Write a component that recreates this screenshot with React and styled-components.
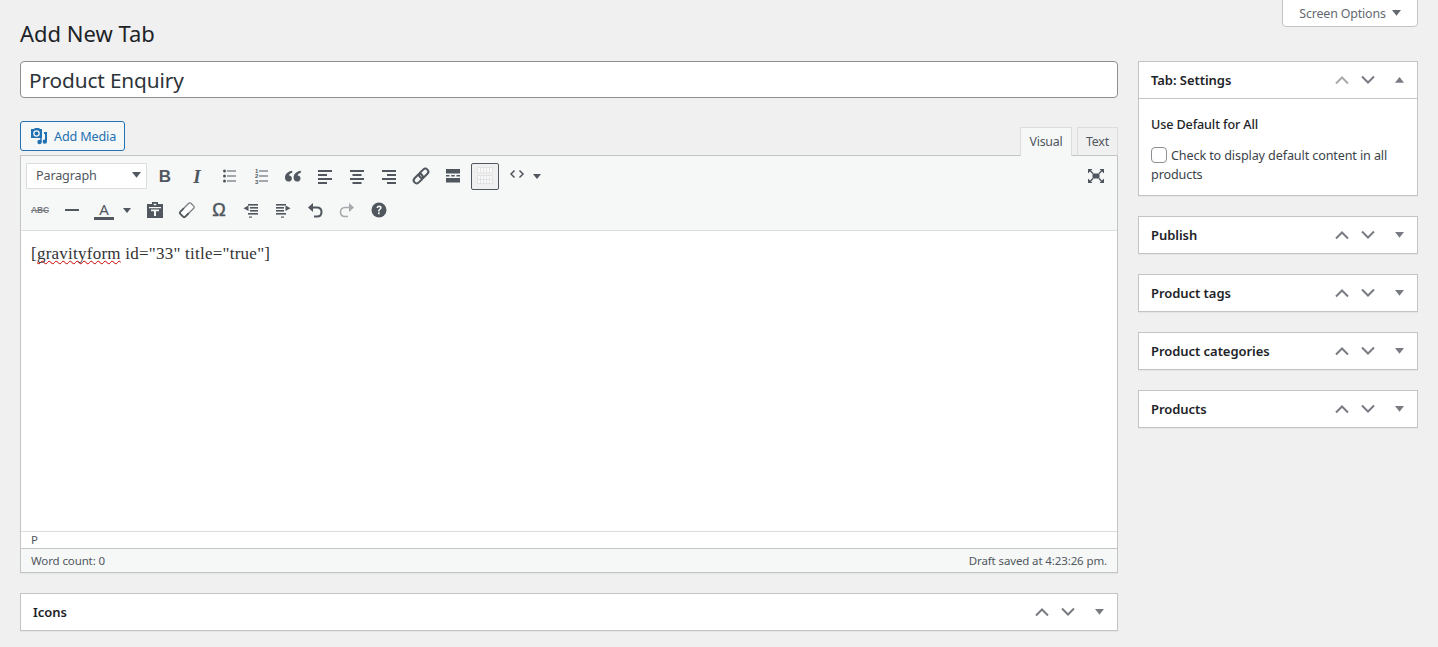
import React from "react";
import styled, { createGlobalStyle } from "styled-components";

const GlobalStyle = createGlobalStyle`
  html, body {
    margin: 0;
    padding: 0;
    background: #f0f0f1;
    color: #3c434a;
    font-family: "Noto Sans", "Open Sans", sans-serif;
    font-size: 13px;
    overflow: hidden;
  }
  * {
    box-sizing: border-box;
  }
`;

const Page = styled.div`
  width: 1438px;
  height: 647px;
  padding: 0 20px;
  overflow: hidden;
`;

const ScreenMeta = styled.div`
  display: flex;
  justify-content: flex-end;
  height: 18px;
`;

const ScreenButton = styled.div`
  width: 136px;
  height: 28px;
  flex: none;
  margin-top: -1px;
  display: flex;
  align-items: center;
  justify-content: center;
  gap: 6px;
  background: #fff;
  border: 1px solid #c3c4c7;
  border-radius: 0 0 4px 4px;
  color: #646970;
  font-size: 12.4px;
  letter-spacing: -0.15px;
`;

const Heading = styled.h1`
  margin: 0 0 13px;
  height: 30px;
  line-height: 30px;
  font-size: 22px;
  font-weight: 400;
  color: #1d2327;
  letter-spacing: 0;
`;

const Columns = styled.div`
  display: grid;
  grid-template-columns: 1098px 280px;
  column-gap: 20px;
`;

const Main = styled.div`
  display: flex;
  flex-direction: column;
`;

const TitleInput = styled.div`
  height: 37px;
  display: flex;
  align-items: center;
  padding-left: 8px;
  background: #fff;
  border: 1px solid #8c8f94;
  border-radius: 4px;
  font-size: 20.8px;
  color: #2c3338;
  letter-spacing: -0.12px;
`;

const EditorTop = styled.div`
  display: flex;
  justify-content: space-between;
  align-items: flex-end;
  height: 57px;
`;

const MediaButton = styled.div`
  width: 105px;
  height: 30px;
  margin-bottom: 4px;
  display: flex;
  align-items: center;
  gap: 5px;
  padding-left: 8px;
  background: #f6f7f7;
  border: 1px solid #2271b1;
  border-radius: 3px;
  color: #2271b1;
  font-size: 12.6px;
  letter-spacing: -0.15px;
`;

const Tabs = styled.div`
  display: flex;
  gap: 5px;
  align-items: flex-end;
  position: relative;
  z-index: 1;
  margin-bottom: -1px;
`;

const Tab = styled.div`
  width: ${(p) => p.$width}px;
  height: 29px;
  display: flex;
  align-items: center;
  justify-content: center;
  padding-bottom: 1px;
  background: ${(p) => (p.$active ? "#f6f7f7" : "#f0f0f1")};
  border: 1px solid #dcdcde;
  border-bottom: ${(p) => (p.$active ? "none" : "1px solid #c3c4c7")};
  color: #50575e;
  font-size: 12.4px;
  letter-spacing: -0.2px;
`;

const Editor = styled.div`
  height: 418px;
  display: flex;
  flex-direction: column;
  border: 1px solid #c3c4c7;
  background: #fff;
  box-shadow: 0 1px 1px rgba(0, 0, 0, 0.04);
`;

const Toolbar = styled.div`
  height: 75px;
  flex: none;
  display: flex;
  flex-direction: column;
  gap: 6px;
  padding: 6px 5px 0;
  background: #f6f7f7;
  border-bottom: 1px solid #dcdcde;
`;

const ToolRow = styled.div`
  display: flex;
  align-items: center;
  gap: 4px;
  height: 28px;
`;

const ParagraphSelect = styled.div`
  width: 121px;
  height: 26px;
  display: flex;
  align-items: center;
  justify-content: space-between;
  padding: 0 5px 2px 9px;
  background: #fff;
  border: 1px solid #dcdcde;
  font-size: 12.6px;
  color: #50575e;
  letter-spacing: -0.15px;
`;

const ToolButton = styled.div`
  width: ${(p) => p.$width || 28}px;
  height: ${(p) => (p.$boxed ? 27 : 28)}px;
  flex: none;
  display: flex;
  align-items: center;
  justify-content: ${(p) => (p.$width ? "flex-start" : "center")};
  gap: ${(p) => p.$gap || 0}px;
  padding-left: ${(p) => (p.$width ? 4 : 0)}px;
  color: #50575e;
  border: ${(p) => (p.$boxed ? "1px solid #50575e" : "none")};
  border-radius: ${(p) => (p.$boxed ? "2px" : "0")};
  background: ${(p) => (p.$boxed ? "#f0f0f1" : "transparent")};
  margin-left: ${(p) => (p.$push ? "auto" : "0")};
  margin-right: ${(p) => (p.$push ? "2px" : "0")};
`;

const BoldGlyph = styled.span`
  font-family: "Liberation Sans", sans-serif;
  font-weight: 700;
  font-size: 17px;
  line-height: 1;
`;

const ItalicGlyph = styled(BoldGlyph)`
  font-family: "Liberation Serif", serif;
  font-style: italic;
  font-size: 19px;
`;

const OmegaGlyph = styled(BoldGlyph)`
  font-size: 18px;
  font-weight: 400;
  -webkit-text-stroke: 0.5px #50575e;
`;

const StrikeGlyph = styled.span`
  font-family: "Liberation Sans", sans-serif;
  font-size: 8.5px;
  font-weight: 700;
  letter-spacing: -0.2px;
  line-height: 1;
  color: #787c82;
  text-decoration: line-through;
`;

const ColorGlyph = styled.span`
  width: 20px;
  height: 20px;
  display: flex;
  justify-content: center;
  font-family: "Noto Sans", sans-serif;
  font-size: 15px;
  line-height: 18px;
  border-bottom: 3px solid #50575e;
`;

const Content = styled.div`
  flex: 1;
  padding: 10px 10px;
  font-family: "Liberation Serif", serif;
  font-size: 17px;
  line-height: 26px;
  color: #333;
  letter-spacing: 0.24px;
`;

const Misspelled = styled.span`
  text-decoration: underline wavy #c00;
  text-decoration-thickness: 1px;
  text-decoration-skip-ink: none;
  text-underline-offset: 1px;
`;

const PathBar = styled.div`
  height: 17px;
  flex: none;
  padding-left: 10px;
  font-size: 11.5px;
  line-height: 16px;
  color: #50575e;
  border-top: 1px solid #dcdcde;
`;

const StatusBar = styled.div`
  height: 24px;
  flex: none;
  display: flex;
  align-items: center;
  justify-content: space-between;
  padding: 0 10px;
  background: #f6f7f7;
  border-top: 1px solid #c3c4c7;
  font-size: 11.5px;
  letter-spacing: -0.12px;
  color: #50575e;
`;

const Side = styled.div`
  display: flex;
  flex-direction: column;
  gap: 20px;
`;

const Postbox = styled.section`
  background: #fff;
  border: 1px solid #c3c4c7;
  box-shadow: 0 1px 1px rgba(0, 0, 0, 0.04);
  margin-top: ${(p) => p.$top || 0}px;
`;

const BoxHeader = styled.div`
  height: 36px;
  display: flex;
  align-items: center;
  padding-left: 12px;
  border-bottom: ${(p) => (p.$open ? "1px solid #c3c4c7" : "none")};
  box-sizing: content-box;
`;

const BoxTitle = styled.h2`
  flex: 1;
  margin: 0;
  font-size: 13px;
  font-weight: 600;
  color: #1d2327;
  letter-spacing: -0.05px;
`;

const HandleButton = styled.div`
  width: ${(p) => p.$width || 26}px;
  height: 36px;
  display: flex;
  align-items: center;
  justify-content: center;
`;

const BoxBody = styled.div`
  padding: 16px 12px 11px;
  font-size: 12.6px;
  line-height: 19px;
  letter-spacing: -0.12px;
`;

const FieldLabel = styled.div`
  font-weight: 500;
  color: #1d2327;
  margin-bottom: 12px;
`;

const Checkbox = styled.span`
  display: inline-block;
  width: 16px;
  height: 16px;
  margin-right: 4px;
  vertical-align: -3px;
  background: #fff;
  border: 1px solid #8c8f94;
  border-radius: 4px;
`;

const ListDigit = styled.text`
  font-family: "Liberation Sans", sans-serif;
  font-size: 6px;
  font-weight: 700;
`;

const Caret = ({ up, color = "#50575e", w = 8 }) => (
  <svg width={w} height={w * 0.625} viewBox="0 0 8 5">
    <path d={up ? "M0 5 L4 0 L8 5 Z" : "M0 0 L8 0 L4 5 Z"} fill={color} />
  </svg>
);

const Chevron = ({ up, color = "#787c82" }) => (
  <svg width="16" height="10" viewBox="0 0 16 10">
    <path
      d={up ? "M2 8.5 L8 2.5 L14 8.5" : "M2 1.5 L8 7.5 L14 1.5"}
      fill="none"
      stroke={color}
      strokeWidth="2"
    />
  </svg>
);

const Icon = ({ children, color = "#50575e" }) => (
  <svg width="20" height="20" viewBox="0 0 20 20" fill={color}>
    {children}
  </svg>
);

const lines = (rows) =>
  rows.map(([x, y, w, h = 2], i) => <rect key={i} x={x} y={y} width={w} height={h} />);

const icons = {
  ul: (
    <Icon>
      <circle cx="5.5" cy="5" r="1.5" />
      <circle cx="5.5" cy="10" r="1.5" />
      <circle cx="5.5" cy="15" r="1.5" />
      {lines([[8, 4.5, 9, 1], [8, 9.5, 9, 1], [8, 14.5, 9, 1]])}
    </Icon>
  ),
  ol: (
    <Icon>
      <ListDigit x="4" y="6.5">1</ListDigit>
      <ListDigit x="4" y="12">2</ListDigit>
      <ListDigit x="4" y="17.5">3</ListDigit>
      {lines([[8, 4.5, 9, 1], [8, 9.5, 9, 1], [8, 14.5, 9, 1]])}
    </Icon>
  ),
  quote: (
    <Icon>
      <path d="M9.2 4.8 C5 5.3 2 8 2 11.6 C2 14 3.4 15.6 5.5 15.6 C7.4 15.6 8.9 14.3 8.9 12.4 C8.9 10.6 7.6 9.5 6 9.5 C6.2 8.3 7.4 7.2 9.2 6.8 Z" />
      <path d="M17.8 4.8 C13.6 5.3 10.6 8 10.6 11.6 C10.6 14 12 15.6 14.1 15.6 C16 15.6 17.5 14.3 17.5 12.4 C17.5 10.6 16.2 9.5 14.6 9.5 C14.8 8.3 16 7.2 17.8 6.8 Z" />
    </Icon>
  ),
  alignLeft: <Icon>{lines([[3, 4, 14], [3, 8, 9], [3, 12, 14], [3, 16, 9]])}</Icon>,
  alignCenter: <Icon>{lines([[3, 4, 14], [5.5, 8, 9], [3, 12, 14], [5.5, 16, 9]])}</Icon>,
  alignRight: <Icon>{lines([[3, 4, 14], [8, 8, 9], [3, 12, 14], [8, 16, 9]])}</Icon>,
  link: (
    <Icon>
      <g fill="none" stroke="#50575e" strokeWidth="2">
        <rect x="7.45" y="4.3" width="10.5" height="6" rx="3" transform="rotate(-45 12.7 7.3)" />
        <rect x="2.05" y="9.7" width="10.5" height="6" rx="3" transform="rotate(-45 7.3 12.7)" />
      </g>
    </Icon>
  ),
  more: <Icon>{lines([[3, 3, 14, 4.5], [3, 9, 3.5, 1.5], [8.2, 9, 3.5, 1.5], [13.5, 9, 3.5, 1.5], [3, 12, 14, 4.5]])}</Icon>,
  kitchen: (
    <Icon color="#fafafa">
      <rect x="2.5" y="1.5" width="15" height="5.5" />
      <rect x="2.5" y="9.5" width="15" height="8" />
      <g fill="none" stroke="#e2e3e4" strokeWidth="1">
        <rect x="2.5" y="1.5" width="15" height="5.5" />
        <rect x="2.5" y="9.5" width="15" height="8" />
        <path d="M5.5 1.5V7M8.5 1.5V7M11.5 1.5V7M14.5 1.5V7M5.5 9.5V17.5M8.5 9.5V17.5M11.5 9.5V17.5M14.5 9.5V17.5M2.5 13.5H17.5" />
      </g>
    </Icon>
  ),
  code: (
    <Icon>
      <path d="M7.5 6 L4 9.5 L7.5 13 M12.5 6 L16 9.5 L12.5 13" fill="none" stroke="#50575e" strokeWidth="1.5" transform="translate(0 -1.5)" />
    </Icon>
  ),
  fullscreen: (
    <Icon>
      <rect x="6.5" y="7.5" width="7" height="5" />
      <path d="M2 3 H6.5 L5 4.5 L7.5 7 L6.5 8 L4 5.5 L2 7.5 Z M18 3 H13.5 L15 4.5 L12.5 7 L13.5 8 L16 5.5 L18 7.5 Z M2 17 H6.5 L5 15.5 L7.5 13 L6.5 12 L4 14.5 L2 12.5 Z M18 17 H13.5 L15 15.5 L12.5 13 L13.5 12 L16 14.5 L18 12.5 Z" />
    </Icon>
  ),
  hr: <Icon>{lines([[3, 9, 14]])}</Icon>,
  paste: (
    <Icon>
      <path fillRule="evenodd" d="M7 2 H13 V4 H18 V18 H2 V4 H7 Z M8.7 3.7 V5.3 H11.3 V3.7 Z M4 7 V8.3 H16 V7 Z M6 9.5 V11.3 H9 V16 H11 V11.3 H14 V9.5 Z" />
    </Icon>
  ),
  eraser: (
    <Icon>
      <g transform="rotate(45 10 10)">
        <rect x="6.5" y="2.5" width="7" height="15" rx="1.5" fill="#fff" stroke="#787c82" strokeWidth="1.3" />
        <path d="M6.5 11 V16 A1.5 1.5 0 0 0 8 17.5 H12 A1.5 1.5 0 0 0 13.5 16 V11" fill="none" stroke="#50575e" strokeWidth="1.7" />
      </g>
    </Icon>
  ),
  outdent: (
    <Icon>
      {lines([[7, 4, 10, 1.6], [9, 7, 8, 1.6], [9, 10, 8, 1.6], [7, 13, 10, 1.6], [8, 16.5, 3, 1.2]])}
      <path d="M2.5 8.3 L7.5 5.5 V11 Z" />
    </Icon>
  ),
  indent: (
    <Icon>
      {lines([[3, 4, 10, 1.6], [3, 7, 8, 1.6], [3, 10, 8, 1.6], [3, 13, 10, 1.6], [8, 16.5, 3, 1.2]])}
      <path d="M17.5 8.3 L12.5 5.5 V11 Z" />
    </Icon>
  ),
  undo: (
    <Icon>
      <path d="M4.5 7.5 H12 C15 7.5 16.5 9.5 16.5 12 C16.5 14.5 15 16.5 12 16.5 H9" fill="none" stroke="#50575e" strokeWidth="2" />
      <path d="M3 7.5 L8 3 V12 Z" />
    </Icon>
  ),
  redo: (
    <Icon color="#a7aaad">
      <path d="M15.5 7.5 H8 C5 7.5 3.5 9.5 3.5 12 C3.5 14.5 5 16.5 8 16.5 H11" fill="none" stroke="#a7aaad" strokeWidth="1.6" />
      <path d="M17 7.5 L12 3 V12 Z" />
    </Icon>
  ),
  help: (
    <Icon>
      <circle cx="10" cy="10" r="7.5" />
      <path d="M7.5 8 C7.5 6.5 8.6 5.6 10.1 5.6 C11.7 5.6 12.7 6.5 12.7 7.8 C12.7 9.6 10.6 9.6 10.6 11.5 H9 C9 9 10.9 8.9 10.9 7.9 C10.9 7.4 10.6 7.1 10 7.1 C9.5 7.1 9.2 7.5 9.2 8 Z" fill="#f6f7f7" />
      <rect x="9" y="12.4" width="1.7" height="1.8" fill="#f6f7f7" />
    </Icon>
  ),
  media: (
    <Icon color="#2271b1">
      <path fillRule="evenodd" d="M2 3 H5 L6 2 H10 L11 3 H13 V12 H2 Z M7.5 4.2 A3.3 3.3 0 1 0 7.5 10.8 A3.3 3.3 0 1 0 7.5 4.2 Z" />
      <circle cx="7.5" cy="7.5" r="2" />
      <path d="M15 6 H18 V15.5 A2.2 2.2 0 1 1 16 13.4 V8 H15 Z" />
      <circle cx="10.5" cy="16" r="2.2" />
      <rect x="11.2" y="11" width="1.5" height="5" />
    </Icon>
  ),
};

const firstRow = ["ul", "ol", "quote", "alignLeft", "alignCenter", "alignRight", "link", "more"];
const secondRow = ["paste", "eraser"];
const thirdRow = ["outdent", "indent", "undo", "redo", "help"];

const Handles = ({ open, upColor }) => (
  <>
    <HandleButton>
      <Chevron up color={upColor} />
    </HandleButton>
    <HandleButton>
      <Chevron />
    </HandleButton>
    <HandleButton $width={36}>
      <Caret up={open} color="#787c82" w={9} />
    </HandleButton>
  </>
);

const closedBoxes = ["Publish", "Product tags", "Product categories", "Products"];

export default function App() {
  return (
    <Page>
      <GlobalStyle />
      <ScreenMeta>
        <ScreenButton>
          Screen Options <Caret color="#646970" w={9} />
        </ScreenButton>
      </ScreenMeta>
      <Heading>Add New Tab</Heading>
      <Columns>
        <Main>
          <TitleInput>Product Enquiry</TitleInput>
          <EditorTop>
            <MediaButton>
              {icons.media}
              Add Media
            </MediaButton>
            <Tabs>
              <Tab $active $width={52}>Visual</Tab>
              <Tab $width={41}>Text</Tab>
            </Tabs>
          </EditorTop>
          <Editor>
            <Toolbar>
              <ToolRow>
                <ParagraphSelect>
                  Paragraph <Caret w={9} />
                </ParagraphSelect>
                <ToolButton><BoldGlyph>B</BoldGlyph></ToolButton>
                <ToolButton><ItalicGlyph>I</ItalicGlyph></ToolButton>
                {firstRow.map((name) => (
                  <ToolButton key={name}>{icons[name]}</ToolButton>
                ))}
                <ToolButton $boxed>{icons.kitchen}</ToolButton>
                <ToolButton $width={42} $gap={6}>
                  {icons.code}
                  <Caret w={8} />
                </ToolButton>
                <ToolButton $push>{icons.fullscreen}</ToolButton>
              </ToolRow>
              <ToolRow>
                <ToolButton><StrikeGlyph>ABC</StrikeGlyph></ToolButton>
                <ToolButton>{icons.hr}</ToolButton>
                <ToolButton $width={47} $gap={9}>
                  <ColorGlyph>A</ColorGlyph>
                  <Caret w={8} />
                </ToolButton>
                {secondRow.map((name) => (
                  <ToolButton key={name}>{icons[name]}</ToolButton>
                ))}
                <ToolButton><OmegaGlyph>Ω</OmegaGlyph></ToolButton>
                {thirdRow.map((name) => (
                  <ToolButton key={name}>{icons[name]}</ToolButton>
                ))}
              </ToolRow>
            </Toolbar>
            <Content>
              [<Misspelled>gravityform</Misspelled> id="33" title="true"]
            </Content>
            <PathBar>P</PathBar>
            <StatusBar>
              <span>Word count: 0</span>
              <span>Draft saved at 4:23:26 pm.</span>
            </StatusBar>
          </Editor>
          <Postbox $top={20}>
            <BoxHeader>
              <BoxTitle>Icons</BoxTitle>
              <Handles />
            </BoxHeader>
          </Postbox>
        </Main>
        <Side>
          <Postbox>
            <BoxHeader $open>
              <BoxTitle>Tab: Settings</BoxTitle>
              <Handles open upColor="#a7aaad" />
            </BoxHeader>
            <BoxBody>
              <FieldLabel>Use Default for All</FieldLabel>
              <div>
                <Checkbox />
                Check to display default content in all products
              </div>
            </BoxBody>
          </Postbox>
          {closedBoxes.map((title) => (
            <Postbox key={title}>
              <BoxHeader>
                <BoxTitle>{title}</BoxTitle>
                <Handles />
              </BoxHeader>
            </Postbox>
          ))}
        </Side>
      </Columns>
    </Page>
  );
}
